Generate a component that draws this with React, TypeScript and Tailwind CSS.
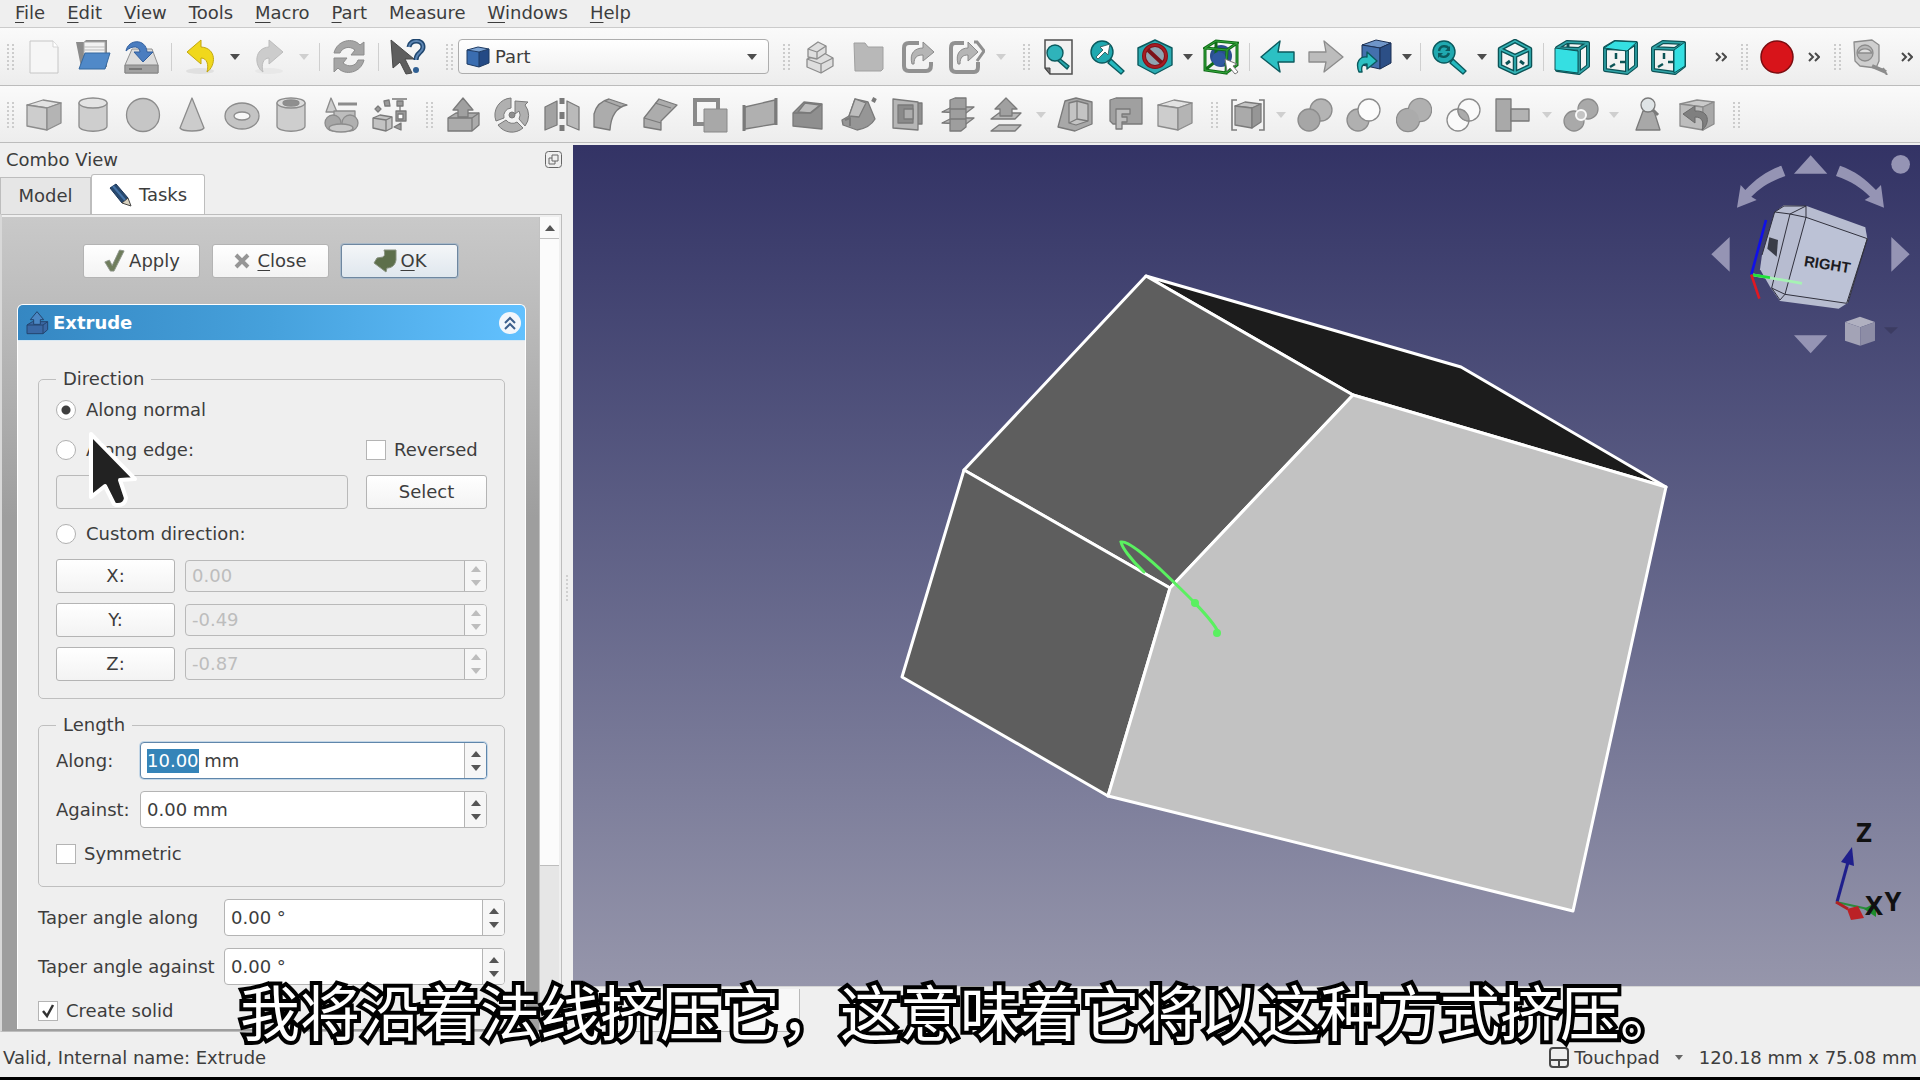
import React, { useEffect, useRef } from "react";
import clsx from "clsx";

interface IconProps {
  children: React.ReactNode;
  size?: string;
}

const Icon: React.FC<IconProps> = ({ children, size = "size-9" }) => (
  <svg viewBox="0 0 36 36" className={clsx(size, "shrink-0")} aria-hidden="true">
    {children}
  </svg>
);

interface Tool {
  label: string;
  art: React.ReactNode;
}

const G = { stroke: "#8c8c8c", strokeWidth: 1.3, strokeLinejoin: "round" as const };
const D = { stroke: "#7a7a7a", strokeWidth: 1.3, strokeLinejoin: "round" as const };
const TEAL = { stroke: "#0b5a5e", strokeWidth: 1.4, strokeLinejoin: "round" as const };

const grayCube = (
  <g {...G}>
    <path d="M1 8L17 3L35 6L21 11Z" fill="#e2e2e2" />
    <path d="M1 8L21 11V33L1 29Z" fill="#cdcdcd" />
    <path d="M21 11L35 6V26L21 33Z" fill="#b4b4b4" />
  </g>
);

const fileTools: Tool[] = [
  {
    label: "New",
    art: (
      <g>
        <path d="M4 2H27L32 8V34H4Z" fill="#f6f6f6" stroke="#c6c6c6" />
        <path d="M27 2V8H32" fill="#fff" stroke="#d5d5d5" />
      </g>
    ),
  },
  {
    label: "Open",
    art: (
      <g>
        <path d="M1 3H9L11 1H32V28H6Z" fill="#8b8b8b" />
        <path d="M9 3H30V16H9Z" fill="#f2f2f2" stroke="#aaa" />
        <path d="M9 8H30M9 11H30" stroke="#bbb" />
        <path d="M10 14H35L30 30H4Z" fill="#5089c8" stroke="#35689f" />
      </g>
    ),
  },
  {
    label: "Save",
    art: (
      <g>
        <path d="M8 10H28L34 26V34H1V26Z" fill="#dcdcdc" stroke="#909090" />
        <path d="M1 26H34V34H1Z" fill="#a2a2a2" stroke="#848484" />
        <path d="M5 30H18" stroke="#777" strokeWidth="2" />
        <path d="M2 12C4 0 22-1 23 13H29L19 23L10 13H16C16 7 8 6 2 12Z" fill="#4a7dc0" stroke="#315f9e" />
      </g>
    ),
  },
];

const undoArt = (
  <g>
    <ellipse cx="17" cy="32" rx="14" ry="3" fill="#e0e0e0" />
    <path d="M4 13L18 1V8C34 9 33 27 24 33C26 26 24 19 18 19V25Z" fill="#f0d81c" stroke="#c2a70e" />
  </g>
);
const redoArt = (
  <g>
    <ellipse cx="17" cy="32" rx="14" ry="3" fill="#e8e8e8" />
    <path d="M31 13L17 1V8C2 9 2 27 11 33C9 26 11 19 17 19V25Z" fill="#cccccc" stroke="#bcbcbc" />
  </g>
);
const refreshArt = (
  <g fill="#a5a5a5" stroke="#8d8d8d">
    <path d="M3 14C6 1 22-2 29 6L33 3V16H20L24 11C18 6 11 9 9 14Z" />
    <path d="M33 21C30 34 14 37 7 29L3 33V19H16L12 24C18 29 25 27 27 21Z" />
  </g>
);
const whatsThisArt = (
  <g>
    <path d="M1 1L24 20L15 20L22 34L16 35L10 23L3 29Z" fill="#5e5e5e" stroke="#484848" />
    <path d="M19 8C20 0 33 0 33 8C33 14 26 13 26 21" fill="none" stroke="#1f466f" strokeWidth="5" />
    <path d="M19 8C20 0 33 0 33 8C33 14 26 13 26 21" fill="none" stroke="#5d86b4" strokeWidth="2" />
    <circle cx="26" cy="31" r="3" fill="#2f5f93" />
  </g>
);

const structureTools: Tool[] = [
  {
    label: "Create part",
    art: (
      <g {...G} fill="#dedede">
        <path d="M5 20L22 14L31 19V27L19 34L5 28Z" />
        <path d="M5 20L19 25L31 19M19 25V34" fill="none" />
        <path d="M6 10L16 3L24 7V14L15 20L6 18Z" />
        <path d="M6 10L15 13L24 7M15 13V20" fill="none" />
      </g>
    ),
  },
  {
    label: "Create group",
    art: <path d="M3 4H14L17 8H32V30L30 32H4Z" fill="#b8b8b8" stroke="#a0a0a0" />,
  },
  {
    label: "Make link",
    art: (
      <g>
        <path d="M19 4H9Q4 4 4 9V27Q4 32 9 32H26Q31 32 31 26V23" fill="none" stroke="#919191" strokeWidth="4" />
        <path d="M12 25C9 14 15 9 23 9V3L34 13L23 22V16C17 16 14 18 14 25Z" fill="#b5b5b5" stroke="#8a8a8a" />
      </g>
    ),
  },
  {
    label: "Make link group",
    art: (
      <g>
        <path d="M15 4H6Q2 4 2 9V28Q2 33 7 33H25Q29 33 29 28V23" fill="none" stroke="#919191" strokeWidth="4" />
        <path d="M25 3H28L35 12L28 22" fill="none" stroke="#8f8f8f" strokeWidth="3" />
        <path d="M9 25C6 14 12 9 19 9V3L29 13L19 22V16C14 16 11 18 11 25Z" fill="#b5b5b5" stroke="#8a8a8a" />
      </g>
    ),
  },
];

const lens = (
  <g>
    <path d="M22 20L35 32L32 35L19 24Z" fill="#25b9bf" {...TEAL} />
    <circle cx="13" cy="13" r="11" fill="#20a9b0" {...TEAL} />
  </g>
);

const fitTools: Tool[] = [
  {
    label: "Fit all",
    art: (
      <g>
        <path d="M4 1H31V35H9L4 29Z" fill="#f1f1f1" stroke="#505050" strokeWidth="1.5" />
        <path d="M4 29L9 35V29Z" fill="#777" stroke="#444" />
        <path d="M18 19L28 27L26 30L16 21Z" fill="#28a7ad" {...TEAL} />
        <circle cx="14" cy="14" r="8" fill="#2fb3ba" {...TEAL} />
      </g>
    ),
  },
  {
    label: "Fit selection",
    art: (
      <g>
        {lens}
        <path d="M7 18L14 11L11 8L21 5L19 16L16 13L9 20Z" fill="#fff" stroke="#3c6a6c" />
      </g>
    ),
  },
  {
    label: "Draw style",
    art: (
      <g>
        <path d="M18 1L35 9V26L18 35L1 26V9Z" fill="#2aabb2" {...TEAL} />
        <circle cx="18" cy="17" r="11" fill="#8fa3b0" stroke="#7c1218" strokeWidth="4" />
        <path d="M10 10L26 25" stroke="#7c1218" strokeWidth="4" />
        <circle cx="18" cy="17" r="11" fill="none" stroke="#a81c22" strokeWidth="2" />
      </g>
    ),
  },
];

const boundBoxArt = (
  <g>
    <circle cx="18" cy="17" r="11" fill="#2b4f8e" />
    <path d="M2 9L13 2L34 4L24 11ZM2 9V31L23 34L24 11M34 4V26L23 34M13 2V22L2 31M13 22L34 26" fill="none" stroke="#0f6b17" strokeWidth="3" />
    <path d="M2 9L13 2L34 4L24 11ZM2 9V31L23 34L24 11M34 4V26L23 34" fill="none" stroke="#35a83c" strokeWidth="1" />
    <circle cx="16" cy="20" r="7" fill="#2f58a0" />
    <path d="M22 20L34 25L30 27L35 33L32 35L27 29L24 32Z" fill="#fff" stroke="#777" />
  </g>
);

const navTools: Tool[] = [
  {
    label: "Back",
    art: <path d="M1 18L20 2L18 13H34V23H18L20 33Z" fill="#2cc0c3" {...TEAL} />,
  },
  {
    label: "Forward",
    art: <path d="M35 18L16 2L18 13H1V23H18L16 33Z" fill="#bcbcbc" {...G} />,
  },
  {
    label: "Link navigation",
    art: (
      <g stroke="#1b2f52" strokeLinejoin="round">
        <path d="M6 6L20 1L35 4L24 9Z" fill="#6f95c8" />
        <path d="M6 6L24 9V30L6 26Z" fill="#4470ad" />
        <path d="M24 9L35 4V24L24 30Z" fill="#2c4f86" />
        <path d="M3 33C-1 23 4 17 11 18V13L21 22L11 30V25C6 25 5 28 6 33Z" fill="#2cc0c3" {...TEAL} />
      </g>
    ),
  },
];

const syncArt = (
  <g>
    {lens}
    <path d="M8 12C9 6 16 6 18 10M18 14C16 19 10 19 8 15" fill="none" stroke="#0b5a5e" strokeWidth="2.4" />
    <path d="M19 7V12H14ZM7 19V14H12Z" fill="#0b5a5e" />
  </g>
);

const isoArt = (
  <g fill="none" strokeLinejoin="round">
    <path d="M18 2L33 10V27L18 34L3 27V10ZM3 10L18 17L33 10M18 17V34" stroke="#0c5356" strokeWidth="4.5" />
    <path d="M18 2L33 10V27L18 34L3 27V10ZM3 10L18 17L33 10M18 17V34" stroke="#35b5b8" strokeWidth="1.6" />
    <path d="M9 25L13 22M27 25L23 22" stroke="#0c5356" strokeWidth="3" />
  </g>
);

const FRAME = "M3 9L13 3L34 4L25 10ZM3 9V31L25 34V10M34 4V27L25 34";

const CubeView: React.FC<{ face: string; inner?: boolean }> = ({ face, inner }) => (
  <g fill="none" strokeLinejoin="round">
    {inner && <path d="M14 14V20M8 28L13 25M18 23H23" stroke="#0c5356" strokeWidth="2.5" />}
    {!inner && <path d="M14 4V9" stroke="#0c5356" strokeWidth="3" />}
    <path d={FRAME} stroke="#0c5356" strokeWidth="4" />
    <path d={FRAME} stroke="#30a4a8" strokeWidth="1.6" />
    <path d={face} fill="#35dfe2" stroke="#0c5356" />
  </g>
);

const viewTools: Tool[] = [
  { label: "Front", art: <CubeView face="M1 9L24 12V34L1 31Z" /> },
  { label: "Top", art: <CubeView face="M2 9L13 2L35 3L25 12Z" inner /> },
  { label: "Right", art: <CubeView face="M24 11L35 3V27L24 34Z" inner /> },
];

const recordArt = <circle cx="18" cy="18" r="16" fill="#d8141a" stroke="#7b0c10" strokeWidth="1.5" />;

const tapeArt = (
  <g {...G}>
    <path d="M2 3L20 1L27 6V22L24 29L8 27L3 22Z" fill="#cfcfcf" />
    <circle cx="13" cy="14" r="8" fill="#b8b8b8" />
    <path d="M6 14H20A8 8 0 0 0 6 14Z" fill="#dedede" />
    <path d="M20 27L34 33" strokeWidth="4" />
    <path d="M31 29L35 36" strokeWidth="2" />
  </g>
);

const primitiveTools: Tool[] = [
  { label: "Box", art: grayCube },
  {
    label: "Cylinder",
    art: (
      <g {...G}>
        <path d="M4 6V29C4 36 32 36 32 29V6Z" fill="#cecece" />
        <ellipse cx="18" cy="6" rx="14" ry="5" fill="#e3e3e3" />
      </g>
    ),
  },
  { label: "Sphere", art: <circle cx="18" cy="18" r="16.5" fill="#c6c6c6" {...G} /> },
  { label: "Cone", art: <path d="M18 1L30 31C27 35 9 35 6 31Z" fill="#cccccc" {...G} /> },
  {
    label: "Torus",
    art: (
      <g {...G}>
        <ellipse cx="18" cy="19" rx="17" ry="13" fill="#c4c4c4" />
        <ellipse cx="18" cy="19" rx="8" ry="4" fill="#f8f8f8" />
      </g>
    ),
  },
  {
    label: "Tube",
    art: (
      <g {...G}>
        <path d="M4 6V29C4 36 32 36 32 29V6Z" fill="#cecece" />
        <ellipse cx="18" cy="6" rx="14" ry="5" fill="#dcdcdc" />
        <ellipse cx="18" cy="6" rx="8" ry="3" fill="#8f8f8f" />
      </g>
    ),
  },
  {
    label: "Primitives",
    art: (
      <g {...G}>
        <path d="M8 1L14 15H3Z" fill="#cdcdcd" />
        <path d="M15 7H34" strokeWidth="3" />
        <path d="M11 14H32V28H11Z" fill="#bdbdbd" />
        <circle cx="10" cy="26" r="8" fill="#a6a6a6" />
        <circle cx="27" cy="26" r="8" fill="#b0b0b0" />
        <ellipse cx="18" cy="31" rx="12" ry="4" fill="#c8c8c8" />
      </g>
    ),
  },
  {
    label: "Shape builder",
    art: (
      <g {...D}>
        <path d="M1 21L8 18L20 20V31L14 34L1 31Z" fill="#c3c3c3" />
        <path d="M1 21L14 23L20 20M14 23V34" fill="none" />
        <path d="M3 12L6 9L9 12L6 15ZM12 4L17 3L18 9L13 9Z" fill="#9a9a9a" />
        <path d="M20 2H35M25 4H31V9H25ZM24 14H34V24H24ZM28 9V14M22 30L29 26L29 33Z" fill="#9a9a9a" />
        <path d="M26 17H31V22H26Z" fill="#fff" />
      </g>
    ),
  },
];

const shapeTools: Tool[] = [
  {
    label: "Extrude",
    art: (
      <g {...D}>
        <path d="M3 21L11 16H34V28L27 34H3Z" fill="#ababab" />
        <path d="M3 21H27L34 16M27 21V34" fill="none" />
        <path d="M18 1L28 13H23V20H13V13H8Z" fill="#a0a0a0" />
      </g>
    ),
  },
  {
    label: "Revolve",
    art: (
      <g fill="#b0b0b0" {...D} strokeWidth="1">
        <path d="M17 1V11A8 8 0 0 0 10 21L2 24A17 17 0 0 1 17 1Z" />
        <path d="M4 28L12 23A8 8 0 0 0 23 25L29 31A17 17 0 0 1 4 28Z" />
        <path d="M31 29L25 22A8 8 0 0 0 25 14L21 17V4L34 5L31 8A17 17 0 0 1 31 29Z" />
        <circle cx="18" cy="18" r="3" fill="#8e8e8e" />
      </g>
    ),
  },
  {
    label: "Mirror",
    art: (
      <g {...D}>
        <path d="M1 10L13 4V28L1 33Z" fill="#a2a2a2" />
        <path d="M35 10L23 4V28L35 33Z" fill="#bababa" />
        <path d="M18 1V7M18 15V22M18 28V34" strokeWidth="5" />
      </g>
    ),
  },
  {
    label: "Fillet",
    art: (
      <g {...D}>
        <path d="M1 30V17C3 9 8 4 16 2L34 8C24 10 18 17 17 33Z" fill="#acacac" />
        <path d="M12 4L28 10" fill="none" />
      </g>
    ),
  },
  {
    label: "Chamfer",
    art: (
      <g {...D}>
        <path d="M1 30V21L16 2L34 8L18 24V33Z" fill="#acacac" />
        <path d="M12 6L28 11M1 21L18 26" fill="none" />
      </g>
    ),
  },
  {
    label: "Make face",
    art: (
      <g>
        <path d="M3 3H26V27H3Z" fill="none" stroke="#8a8a8a" strokeWidth="4" />
        <path d="M12 12H35V35H12Z" fill="#a8a8a8" stroke="#888" />
      </g>
    ),
  },
  {
    label: "Ruled surface",
    art: (
      <g {...D}>
        <path d="M3 10L33 3V27L3 32Z" fill="#b0b0b0" />
        <path d="M2 8V34M34 1V28" strokeWidth="3" />
      </g>
    ),
  },
  {
    label: "Loft",
    art: (
      <g {...D}>
        <path d="M2 16L13 5L31 7V32L2 29Z" fill="#8f8f8f" />
        <path d="M7 15L14 6L29 8L19 16Z" fill="#bcbcbc" />
        <path d="M2 16H20L31 7" fill="none" />
      </g>
    ),
  },
  {
    label: "Sweep",
    art: (
      <g {...D}>
        <path d="M14 2L27 5L34 22C30 29 22 32 16 33L2 28L1 23L8 19Z" fill="#969696" />
        <path d="M14 2L25 6L18 20L8 19Z" fill="#bdbdbd" />
        <path d="M4 23L9 21V29" fill="none" strokeWidth="2" />
        <path d="M32 5L34 1" strokeWidth="4" />
      </g>
    ),
  },
  {
    label: "Section",
    art: (
      <g {...D}>
        <path d="M20 6H32V27H20Z" fill="#909090" />
        <path d="M3 2L28 5V33L3 31Z" fill="#b6b6b6" />
        <path d="M8 8H23V26H8Z" fill="#8a8a8a" />
        <path d="M14 12H23V22H14Z" fill="#adadad" />
      </g>
    ),
  },
  {
    label: "Cross sections",
    art: (
      <g {...D}>
        <path d="M2 15L12 10H34L26 16ZM2 26L12 21H34L26 27Z" fill="#b7b7b7" />
        <path d="M10 3L15 1H26V30L21 34H10Z" fill="#9e9e9e" />
        <path d="M10 12H26M10 22H26" fill="none" />
      </g>
    ),
  },
  {
    label: "Offset",
    art: (
      <g {...D}>
        <path d="M2 22L10 16H32L26 22Z" fill="#b8b8b8" />
        <path d="M2 34L10 28H32L26 34Z" fill="#b8b8b8" />
        <path d="M17 1L28 12H23V19H11V12H6Z" fill="#a0a0a0" />
      </g>
    ),
  },
];

const surfaceTools: Tool[] = [
  {
    label: "Thickness",
    art: (
      <g {...D}>
        <path d="M8 4L19 1L35 5V27L18 34L1 30Z" fill="#a8a8a8" />
        <path d="M12 6L20 4L31 7V24L19 28L12 26Z" fill="#c4c4c4" />
        <path d="M20 4V22L31 24M20 22L12 26" fill="none" />
      </g>
    ),
  },
  {
    label: "Projection",
    art: (
      <g {...D}>
        <path d="M3 3L9 1H35V27H6L3 24Z" fill="#a0a0a0" />
        <path d="M9 12H23V17H15V20H20V25H15V32H9Z" fill="#bdbdbd" />
      </g>
    ),
  },
  { label: "Color per face", art: grayCube },
];

const compoundArt = (
  <g>
    <path d="M7 3H2V33H7M29 3H34V33H29" fill="none" stroke="#7c7c7c" strokeWidth="1.6" />
    <g {...D}>
      <path d="M5 9L15 5L31 7L22 11Z" fill="#c4c4c4" />
      <path d="M5 9L22 11V31L5 28Z" fill="#aaaaaa" />
      <path d="M22 11L31 7V25L22 31Z" fill="#969696" />
    </g>
  </g>
);

const booleanTools: Tool[] = [
  {
    label: "Boolean",
    art: (
      <g {...G}>
        <circle cx="24" cy="13" r="11" fill="#b4b4b4" />
        <circle cx="12" cy="23" r="11" fill="#a6a6a6" />
      </g>
    ),
  },
  {
    label: "Cut",
    art: (
      <g {...G}>
        <circle cx="12" cy="23" r="11" fill="#b0b0b0" />
        <circle cx="23" cy="13" r="11" fill="#fbfbfb" />
      </g>
    ),
  },
  {
    label: "Union",
    art: (
      <g>
        <g {...G} strokeWidth="2.5">
          <circle cx="24" cy="13" r="11" />
          <circle cx="12" cy="23" r="11" />
        </g>
        <circle cx="24" cy="13" r="11" fill="#b0b0b0" />
        <circle cx="12" cy="23" r="11" fill="#ababab" />
      </g>
    ),
  },
  {
    label: "Intersection",
    art: (
      <g {...G}>
        <circle cx="12" cy="23" r="11" fill="#fafafa" />
        <circle cx="23" cy="13" r="11" fill="#fafafa" />
        <path d="M12 12A11 11 0 0 1 23 24A11 11 0 0 1 12 12Z" fill="#ababab" />
      </g>
    ),
  },
  {
    label: "Connect",
    art: (
      <g {...D}>
        <path d="M1 2H16V34H1Z" fill="#a9a9a9" />
        <path d="M16 12H34V24H16Z" fill="#b3b3b3" />
      </g>
    ),
  },
];

const splitArt = (
  <g {...G}>
    <circle cx="25" cy="12" r="10" fill="#a9a9a9" />
    <circle cx="11" cy="24" r="10" fill="#a9a9a9" />
    <circle cx="18" cy="18" r="5" fill="#c4c4c4" stroke="#fafafa" strokeWidth="2" />
  </g>
);

const checkTools: Tool[] = [
  {
    label: "Check geometry",
    art: (
      <g {...D}>
        <path d="M13 14H24L30 33H6Z" fill="#a8a8a8" />
        <path d="M22 12L28 18" strokeWidth="3" />
        <circle cx="18" cy="8" r="7" fill="#dfe4e6" />
      </g>
    ),
  },
  {
    label: "Defeaturing",
    art: (
      <g>
        <g {...G}>
          <path d="M1 7L18 3L35 5L24 10Z" fill="#cacaca" />
          <path d="M1 7L24 10V33L1 29Z" fill="#bdbdbd" />
          <path d="M24 10L35 5V27L24 33Z" fill="#a8a8a8" />
        </g>
        <path d="M4 17L16 9V14C31 13 31 27 23 33C25 26 24 20 16 20V26Z" fill="#7f7f7f" stroke="#6a6a6a" />
      </g>
    ),
  },
];

const Tools: React.FC<{ items: Tool[]; className: string; disabled?: boolean }> = ({
  items,
  className,
  disabled,
}) => (
  <>
    {items.map((tool) => (
      <button
        key={tool.label}
        type="button"
        aria-label={tool.label}
        disabled={disabled}
        className={clsx("flex items-center justify-center", className)}
      >
        <Icon>{tool.art}</Icon>
      </button>
    ))}
  </>
);

const Drop: React.FC<{ faded?: boolean; className?: string }> = ({ faded, className = "w-5" }) => (
  <button type="button" aria-label="More" className={clsx("flex shrink-0 justify-center", className)}>
    <svg viewBox="0 0 10 6" className={clsx("h-[6px] w-[10px]", faded ? "fill-[#cfcfcf]" : "fill-[#4d4d4d]")}>
      <path d="M0 0H10L5 6Z" />
    </svg>
  </button>
);

const Handle: React.FC<{ className?: string }> = ({ className }) => (
  <div className={clsx("flex w-[18px] shrink-0 justify-center", className)}>
    <svg width="7" height="26" className="fill-[#cccccc]">
      {[0, 4, 8, 12, 16, 20, 24].map((y) => (
        <g key={y}>
          <rect x="0" y={y} width="2" height="2" />
          <rect x="5" y={y} width="2" height="2" />
        </g>
      ))}
    </svg>
  </div>
);

const Separator: React.FC<{ className?: string }> = ({ className = "w-[10px]" }) => (
  <div className={clsx("flex shrink-0 justify-center", className)}>
    <div className="h-7 w-px bg-[#cfcfcf]" />
  </div>
);

const More: React.FC<{ className?: string }> = ({ className }) => (
  <button type="button" aria-label="Show more" className={clsx("flex w-5 shrink-0 justify-center", className)}>
    <svg width="12" height="10" fill="none" stroke="#4a4a4a" strokeWidth="2">
      <path d="M1 1L5 5L1 9M7 1L11 5L7 9" />
    </svg>
  </button>
);

const menus = ["File", "Edit", "View", "Tools", "Macro", "Part", "Measure", "Windows", "Help"];

const MenuBar = () => (
  <nav className="flex h-7 shrink-0 items-center border-b border-[#cbcbcb] pb-[2px] pl-1">
    {menus.map((menu) => (
      <button key={menu} type="button" className="px-[11px] leading-6">
        {menu === "Measure" ? (
          menu
        ) : (
          <>
            <span className="underline underline-offset-3">{menu[0]}</span>
            {menu.slice(1)}
          </>
        )}
      </button>
    ))}
  </nav>
);

const MainToolbar = () => (
  <div className="flex h-[58px] shrink-0 items-center border-b border-[#bcbcbc] bg-gradient-to-b from-[#fafafa] to-[#ededed] pl-px">
    <Handle />
    <Tools items={fileTools} className="w-[49px]" />
    <Separator />
    <Tools items={[{ label: "Undo", art: undoArt }]} className="w-[49px]" />
    <Drop />
    <Tools items={[{ label: "Redo", art: redoArt }]} className="w-[49px]" disabled />
    <Drop faded />
    <Separator />
    <Tools items={[{ label: "Refresh", art: refreshArt }]} className="w-[49px]" disabled />
    <Separator />
    <Tools items={[{ label: "What's this?", art: whatsThisArt }]} className="w-[49px]" />
    <Handle className="ml-2" />
    <div className="relative flex w-[311px] shrink-0 items-center">
      <select
        aria-label="Workbench"
        className="h-[35px] w-full appearance-none rounded-[4px] border border-[#adadad] bg-gradient-to-b from-white to-[#f1f1f1] pl-9"
      >
        <option>Part</option>
      </select>
      <div className="pointer-events-none absolute inset-x-2 flex items-center justify-between">
        <svg viewBox="0 0 24 22" className="h-[22px] w-6">
          <path d="M1 4L12 1L23 3L13 6Z" fill="#7ba3d3" />
          <path d="M1 4L13 6V21L1 18Z" fill="#3a6db0" />
          <path d="M13 6L23 3V17L13 21Z" fill="#244a85" />
          <path d="M1 4L12 1L23 3V17L13 21L1 18ZM1 4L13 6L23 3M13 6V21" fill="none" stroke="#1d3a63" />
        </svg>
        <svg viewBox="0 0 10 6" className="mr-1 h-[6px] w-[10px] fill-[#4d4d4d]">
          <path d="M0 0H10L5 6Z" />
        </svg>
      </div>
    </div>
    <Handle className="ml-2" />
    <Tools items={structureTools} className="w-[49px]" disabled />
    <Drop faded />
    <Handle className="ml-[6px]" />
    <Tools items={fitTools} className="w-12" />
    <Drop className="w-[18px]" />
    <Tools items={[{ label: "Bounding box", art: boundBoxArt }]} className="w-12" />
    <Separator className="w-[9px]" />
    <Tools items={navTools} className="w-12" />
    <Drop className="w-[18px]" />
    <Separator className="w-[9px]" />
    <Tools items={[{ label: "Sync view", art: syncArt }]} className="w-12" />
    <Drop className="w-[18px]" />
    <Tools items={[{ label: "Isometric", art: isoArt }]} className="w-12" />
    <Separator className="w-[9px]" />
    <Tools items={viewTools} className="w-12" />
    <div className="ml-auto flex items-center pr-[3px]">
      <More />
      <Handle className="ml-1" />
      <Tools items={[{ label: "Record macro", art: recordArt }]} className="w-12" />
      <More className="ml-[3px]" />
      <Handle className="ml-1" />
      <Tools items={[{ label: "Measure", art: tapeArt }]} className="w-12" disabled />
      <More className="ml-[3px]" />
    </div>
  </div>
);

const PartToolbar = () => (
  <div className="flex h-[57px] shrink-0 items-center border-b border-[#bcbcbc] bg-gradient-to-b from-[#fafafa] to-[#ededed] pt-[2px] pl-px">
    <Handle />
    <div className="flex w-[396px]">
      <Tools items={primitiveTools} className="flex-1" disabled />
    </div>
    <Handle className="ml-[5px]" />
    <div className="flex w-[594px]">
      <Tools items={shapeTools} className="flex-1" disabled />
    </div>
    <Drop faded className="w-[18px]" />
    <Tools items={surfaceTools} className="w-[50px]" disabled />
    <Handle className="ml-[5px]" />
    <Tools items={[{ label: "Compound", art: compoundArt }]} className="w-[49px]" disabled />
    <Drop faded className="w-[18px]" />
    <div className="flex w-[248px]">
      <Tools items={booleanTools} className="flex-1" disabled />
    </div>
    <Drop faded className="w-[18px]" />
    <Tools items={[{ label: "Split", art: splitArt }]} className="w-[49px]" disabled />
    <Drop faded className="w-[18px]" />
    <Tools items={checkTools} className="w-[49px]" disabled />
    <Handle className="ml-[6px]" />
  </div>
);

const buttonLook = "rounded-[3px] border border-[#b4b4b4] bg-gradient-to-b from-white to-[#f3f3f3]";

const Stepper: React.FC<{ faded?: boolean }> = ({ faded }) => (
  <div
    className={clsx(
      "flex w-[22px] shrink-0 flex-col border-l border-[#b4b4b4] bg-[#f6f6f6]",
      faded ? "fill-[#bdbdbd]" : "fill-[#555]"
    )}
  >
    <button type="button" aria-label="Increase" className="flex flex-1 items-end justify-center pb-1">
      <svg width="10" height="6">
        <path d="M0 6L5 0L10 6Z" />
      </svg>
    </button>
    <button type="button" aria-label="Decrease" className="flex flex-1 items-start justify-center pt-1">
      <svg width="10" height="6">
        <path d="M0 0L5 6L10 0Z" />
      </svg>
    </button>
  </div>
);

interface SpinProps {
  id: string;
  value: string;
  label?: string;
  disabled?: boolean;
  active?: boolean;
}

const SpinBox: React.FC<SpinProps> = ({ id, value, label, disabled, active }) => {
  const ref = useRef<HTMLInputElement>(null);

  // the number is preselected, the unit is not
  useEffect(() => {
    if (!active || !ref.current) return;
    ref.current.focus({ preventScroll: true });
    ref.current.setSelectionRange(0, value.indexOf(" "));
  }, [active, value]);

  return (
    <div
      className={clsx(
        "flex min-w-0 flex-1 overflow-hidden rounded-[4px] border",
        disabled ? "h-8 border-[#b9b9b9] bg-[#eeeeee]" : "h-[37px] bg-white",
        !disabled && (active ? "border-[#5f86ab] shadow-[0_0_0_1px_#c3d6e6]" : "border-[#b4b4b4]")
      )}
    >
      <input
        ref={ref}
        id={id}
        aria-label={label}
        defaultValue={value}
        disabled={disabled}
        className="w-0 flex-1 bg-transparent px-[6px] outline-none selection:bg-[#3584b8] selection:text-white disabled:text-[#bdbdbd]"
      />
      <Stepper faded={disabled} />
    </div>
  );
};

const Radio: React.FC<{ label: string; checked?: boolean }> = ({ label, checked }) => (
  <label className="flex h-5 items-center gap-[10px]">
    <input
      type="radio"
      name="direction"
      defaultChecked={checked}
      className="size-5 appearance-none rounded-full border border-[#b0b0b0] bg-white checked:bg-[radial-gradient(circle,#3f3f3f_4px,#ffffff_5px)]"
    />
    {label}
  </label>
);

const Check: React.FC<{ label: string; checked?: boolean; className?: string }> = ({
  label,
  checked,
  className,
}) => (
  <label className={clsx("flex h-5 items-center gap-2", className)}>
    <span className="relative size-5">
      <input
        type="checkbox"
        defaultChecked={checked}
        className="block size-5 appearance-none border border-[#b4b4b4] bg-white"
      />
      {checked && (
        <svg viewBox="0 0 20 20" className="pointer-events-none absolute inset-0 size-5">
          <path d="M5 10L9 15L15 4" fill="none" stroke="#333" strokeWidth="2.5" />
        </svg>
      )}
    </span>
    {label}
  </label>
);

const axes = [
  { name: "X", value: "0.00" },
  { name: "Y", value: "-0.49" },
  { name: "Z", value: "-0.87" },
];

const ExtrudeForm = () => (
  <section className="mt-[26px] mr-[13px] ml-[15px] rounded-t-[6px] border border-b-0 border-white bg-[#efefef]">
    <header className="flex h-9 items-center rounded-t-[5px] border-b border-[#d8e8f3] bg-gradient-to-r from-[#3587c2] via-[#46a1dc] to-[#62c1ff] pr-1 pl-[7px]">
      <Icon size="size-6">
        <g stroke="#24456f" strokeWidth="1.5">
          <path d="M3 21L11 16H34V28L27 34H3Z" fill="#3a68a4" />
          <path d="M3 21H27L34 16M27 21V34" fill="none" />
          <path d="M18 1L28 13H23V20H13V13H8Z" fill="#4b87c4" />
        </g>
      </Icon>
      <h2 className="ml-1 flex-1 font-bold text-white">Extrude</h2>
      <button
        type="button"
        aria-label="Collapse"
        className="flex size-[22px] items-center justify-center rounded-full bg-[#f2f6fb]"
      >
        <svg width="12" height="14" fill="none" stroke="#3c5f8c" strokeWidth="2">
          <path d="M1 7L6 2L11 7M1 13L6 8L11 13" />
        </svg>
      </button>
    </header>

    <div className="px-5 pt-7 pb-2">
      <fieldset className="rounded-[5px] border border-[#bfbfbf] px-[17px] pb-[17px]">
        <legend className="px-[7px] leading-5">Direction</legend>
        <div className="pt-[11px]">
          <Radio label="Along normal" checked />
        </div>
        <div className="mt-5 flex justify-between">
          <Radio label="Along edge:" />
          <Check label="Reversed" className="w-[121px]" />
        </div>
        <div className="mt-[15px] flex gap-[18px]">
          <input
            aria-label="Edge"
            disabled
            className="h-[34px] w-0 flex-1 rounded-[4px] border border-[#b9b9b9] bg-[#eeeeee]"
          />
          <button type="button" className={clsx("h-[34px] w-[121px]", buttonLook)}>
            Select
          </button>
        </div>
        <div className="my-[15px]">
          <Radio label="Custom direction:" />
        </div>
        <div className="flex flex-col gap-[10px]">
          {axes.map((axis) => (
            <div key={axis.name} className="flex items-center gap-[10px]">
              <button type="button" className={clsx("h-[34px] w-[119px]", buttonLook)}>
                {axis.name}:
              </button>
              <SpinBox id={`dir-${axis.name}`} label={axis.name} value={axis.value} disabled />
            </div>
          ))}
        </div>
      </fieldset>

      <fieldset className="mt-4 rounded-[5px] border border-[#bfbfbf] px-[17px] pb-[22px]">
        <legend className="px-[7px] leading-5">Length</legend>
        <div className="mt-[7px] flex items-center">
          <label htmlFor="along" className="w-[84px]">
            Along:
          </label>
          <SpinBox id="along" value="10.00 mm" active />
        </div>
        <div className="mt-3 flex items-center">
          <label htmlFor="against" className="w-[84px]">
            Against:
          </label>
          <SpinBox id="against" value="0.00 mm" />
        </div>
        <Check label="Symmetric" className="mt-4" />
      </fieldset>

      <div className="mt-3 flex items-center">
        <label htmlFor="taper-along" className="w-[186px]">
          Taper angle along
        </label>
        <SpinBox id="taper-along" value="0.00 °" />
      </div>
      <div className="mt-3 flex items-center">
        <label htmlFor="taper-against" className="w-[186px]">
          Taper angle against
        </label>
        <SpinBox id="taper-against" value="0.00 °" />
      </div>
      <Check label="Create solid" checked className="mt-4" />
    </div>
  </section>
);

const ComboView = () => (
  <aside className="flex w-[573px] shrink-0">
    <div className="flex flex-1 flex-col">
      <div className="flex h-[31px] shrink-0 items-center justify-between pt-[2px] pl-[6px]">
        <h1>Combo View</h1>
        <button type="button" aria-label="Float panel">
          <svg width="17" height="17" fill="none" stroke="#666">
            <rect x="0.5" y="0.5" width="16" height="16" rx="3" />
            <path d="M7 4H13V10H7ZM7 7H4V13H10V10" />
          </svg>
        </button>
      </div>
      <div role="tablist" className="flex h-10 shrink-0 items-end">
        <button
          type="button"
          role="tab"
          className="h-[37px] w-[91px] border border-b-0 border-[#bdbdbd] bg-[#e6e6e6] leading-6"
        >
          Model
        </button>
        <button
          type="button"
          role="tab"
          aria-selected="true"
          className="flex h-10 w-[114px] items-center justify-center gap-[6px] rounded-t-[3px] border border-b-0 border-[#bdbdbd] bg-white"
        >
          <svg viewBox="0 0 24 24" className="size-6">
            <path d="M1 5L7 1L19 15L13 20Z" fill="#27496f" stroke="#1c3557" />
            <path d="M13 20L19 15L22 23Z" fill="#d9d2c0" stroke="#444" />
            <path d="M4 3L16 17" stroke="#4674a8" strokeWidth="2" />
          </svg>
          Tasks
        </button>
      </div>
      <div className="flex min-h-0 flex-1 border border-l-2 border-[#bdbdbd] border-l-[#d8d8d8] pt-[2px] pr-[2px]">
        <div className="min-w-0 flex-1 overflow-hidden bg-[linear-gradient(#c9c9c9,#b9b9b9_110px,#9e9e9e_300px)] pt-[27px]">
          <div className="flex justify-center gap-3">
            <button
              type="button"
              className={clsx("flex h-[34px] w-[117px] items-center justify-center gap-1", buttonLook)}
            >
              <svg viewBox="0 0 24 26" className="h-[26px] w-[22px]">
                <path d="M2 14L7 12L10 18L18 1L23 2L12 24H8Z" fill="#6f7d5c" stroke="#8d958a" />
              </svg>
              Apply
            </button>
            <button
              type="button"
              className={clsx("flex h-[34px] w-[117px] items-center justify-center gap-[7px]", buttonLook)}
            >
              <svg viewBox="0 0 16 16" className="size-4">
                <path d="M2 2L14 14M14 2L2 14" stroke="#969696" strokeWidth="4" />
              </svg>
              <span>
                <span className="underline underline-offset-3">C</span>lose
              </span>
            </button>
            <button
              type="button"
              className="flex h-[34px] w-[117px] items-center justify-center gap-1 rounded-[3px] border border-[#6e87a0] bg-gradient-to-b from-[#f4f6f8] to-[#dfe7ee] shadow-[0_0_0_1px_#a9b9c8]"
            >
              <svg viewBox="0 0 24 24" className="size-6">
                <path d="M11 1H23V11C22 17 18 19 14 19L13 23L1 14L4 9L10 8C12 7 12 4 11 1Z" fill="#5d6f4b" stroke="#87917f" />
              </svg>
              <span>
                <span className="underline underline-offset-3">O</span>K
              </span>
            </button>
          </div>
          <ExtrudeForm />
        </div>
        <div className="flex w-5 shrink-0 flex-col border-l border-[#c2c2c2] bg-[#e6e6e6]">
          <button
            type="button"
            aria-label="Scroll up"
            className="flex h-[22px] shrink-0 items-center justify-center border-b border-[#c0c0c0] bg-[#fafafa]"
          >
            <svg width="10" height="6" className="fill-[#555]">
              <path d="M0 6L5 0L10 6Z" />
            </svg>
          </button>
          <div className="h-[77%] border-b border-[#bdbdbd] bg-[#fbfbfb]" />
        </div>
      </div>
    </div>
    <div className="flex w-[11px] shrink-0 items-center justify-center">
      <svg width="3" height="26" className="fill-[#d0d0d0]">
        {[0, 4, 8, 12, 16, 20, 24].map((y) => (
          <rect key={y} x="0" y={y} width="2" height="2" />
        ))}
      </svg>
    </div>
  </aside>
);

const NaviCube = () => (
  <g transform="translate(1680 140) scale(0.3333)">
    <g fill="#9594b4">
      <path d="M392 46L442 101H342ZM392 640L442 586H342ZM94 343L149 291V395ZM689 343L634 291V395Z" />
      <circle cx="662" cy="73" r="28" />
      <path d="M304 77L316 108C270 124 240 144 214 170L230 180L171 203L182 135L196 150C226 118 260 92 304 77Z" />
      <path d="M480 77L468 108C514 124 544 144 570 170L554 180L612 203L603 135L588 150C558 118 524 92 480 77Z" />
    </g>
    <path
      d="M284 216L312 196L380 198L556 262L562 296L504 488L476 506L300 483L270 440L240 388L246 345Z"
      fill="#b7bcd0"
    />
    <path d="M378 232L562 296L500 490L315 463Z" fill="#bcc2d6" />
    <path
      d="M284 216L330 222L378 232L562 296L500 490L315 463L275 444M330 222L275 444M378 232L315 463M284 216L246 345M330 222L378 198V232M284 216L312 198L378 198M275 444L300 480L315 463M562 296L504 488"
      fill="none"
      stroke="#30303c"
      strokeWidth="3"
    />
    <path d="M268 292L294 300L290 350L262 326Z" fill="#3a3d48" />
    <path d="M214 404L366 430" stroke="#a6f2b4" strokeWidth="8" />
    <path d="M214 404L270 413" stroke="#1fe03a" strokeWidth="8" />
    <path d="M258 240L214 404" stroke="#1010e8" strokeWidth="8" />
    <path d="M214 404L238 476" stroke="#e01822" strokeWidth="8" />
    <text
      x="442"
      y="389"
      textAnchor="middle"
      fontSize="45"
      transform="rotate(9 442 372)"
      className="fill-[#1c1c22] font-['Liberation_Sans',sans-serif] font-bold"
    >
      RIGHT
    </text>
    <path d="M495 546L540 530L585 546L541 562Z" fill="#b0b0c0" />
    <path d="M495 546L541 562V617L495 602Z" fill="#a3a3b6" />
    <path d="M585 546L541 562V617L585 602Z" fill="#8d8da6" />
    <path d="M612 562H654L633 582Z" fill="#3c3c62" />
  </g>
);

const AxisCross = () => (
  <g>
    <path d="M1837 902L1850 855" stroke="#1f1f8c" strokeWidth="3" />
    <path d="M1852 847L1841 862L1854 866Z" fill="#1f1f8c" />
    <path d="M1836 902L1868 909" stroke="#2a8c3c" strokeWidth="2" />
    <path d="M1864 909L1876 902V917Z" fill="#1d8c2c" />
    <path d="M1836 902L1848 909" stroke="#b02024" strokeWidth="3" />
    <path d="M1847 909L1858 906L1864 918L1851 920Z" fill="#bb2226" />
    <g className="fill-[#111] font-['Noto_Sans',sans-serif] font-bold" fontSize="27" textAnchor="middle">
      <text x="1864" y="842">Z</text>
      <text x="1874" y="915">X</text>
      <text x="1893" y="911">Y</text>
    </g>
  </g>
);

const Viewport = () => (
  <svg
    viewBox="573 145 1347 841"
    className="block min-h-0 w-full flex-1 bg-gradient-to-b from-[#333365] to-[#9696ab]"
    role="img"
    aria-label="3D view"
  >
    <g stroke="#fff" strokeWidth="3" strokeLinejoin="round">
      <path d="M1146 276L1461 367L1666 487L1353 395Z" fill="#1c1c1c" />
      <path d="M1146 276L1353 395L1170 588L964 470Z" fill="#5e5e5e" />
      <path d="M964 470L1170 588L1108 796L902 677Z" fill="#5e5e5e" />
      <path d="M1353 395L1666 487L1573 911L1108 796L1170 588Z" fill="#c2c2c2" />
    </g>
    <g fill="none" stroke="#5af060" strokeWidth="3" strokeLinecap="round">
      <path d="M1144 572C1130 559 1122 547 1121 542C1128 540 1150 560 1160 569C1180 588 1212 618 1218 632" />
    </g>
    <circle cx="1195" cy="603" r="4" fill="#5af060" />
    <circle cx="1217" cy="633" r="4" fill="#5af060" />
    <NaviCube />
    <AxisCross />
  </svg>
);

const Pointer = () => (
  <svg viewBox="0 0 52 80" className="pointer-events-none absolute top-[430px] left-[87px] h-20 w-[52px]">
    <path
      d="M4 4L48 49L33 50L39 68Q38 76 29 75L27 74L18 56L4 67Z"
      fill="#222"
      stroke="#fff"
      strokeWidth="4"
      strokeLinejoin="round"
    />
  </svg>
);

const App = () => (
  <div className="relative flex h-screen flex-col overflow-hidden bg-[#efefef] font-['DejaVu_Sans',sans-serif] text-[18px] leading-6 text-[#3d3d3d]">
    <MenuBar />
    <MainToolbar />
    <PartToolbar />

    <main className="flex min-h-0 flex-1">
      <ComboView />
      <div className="flex min-w-0 flex-1 flex-col pt-[2px]">
        <Viewport />
        <div className="h-[46px] shrink-0 border-t border-[#d5d5d5] pt-[2px]">
          <button
            type="button"
            aria-label="Document tab"
            className="block h-[43px] w-[227px] border-r border-b border-[#b9b9b9] bg-[#f7f7f7]"
          />
        </div>
      </div>
    </main>

    <footer className="flex h-12 shrink-0 items-center border-b-[3px] border-black pt-[6px] pl-[3px] pr-[3px]">
      <span className="flex-1">Valid, Internal name: Extrude</span>
      <button type="button" className="flex items-center gap-[5px]">
        <svg width="20" height="22" fill="none" stroke="#484848" strokeWidth="2">
          <rect x="1" y="1" width="18" height="19" rx="3" />
          <path d="M1 13H19M10 13V20" />
        </svg>
        Touchpad
        <svg width="8" height="5" className="ml-[10px] fill-[#666]">
          <path d="M0 0H8L4 5Z" />
        </svg>
      </button>
      <span className="ml-4">120.18 mm x 75.08 mm</span>
    </footer>

    <Pointer />
    <p
      lang="zh-CN"
      className="pointer-events-none absolute inset-x-0 bottom-10 text-center font-['Noto_Sans_CJK_SC',sans-serif] text-[60px] leading-[60px] font-normal whitespace-nowrap text-white [-webkit-text-stroke:8px_black] [paint-order:stroke_fill]"
    >
      我将沿着法线挤压它，这意味着它将以这种方式挤压。
    </p>
  </div>
);

export default App;
